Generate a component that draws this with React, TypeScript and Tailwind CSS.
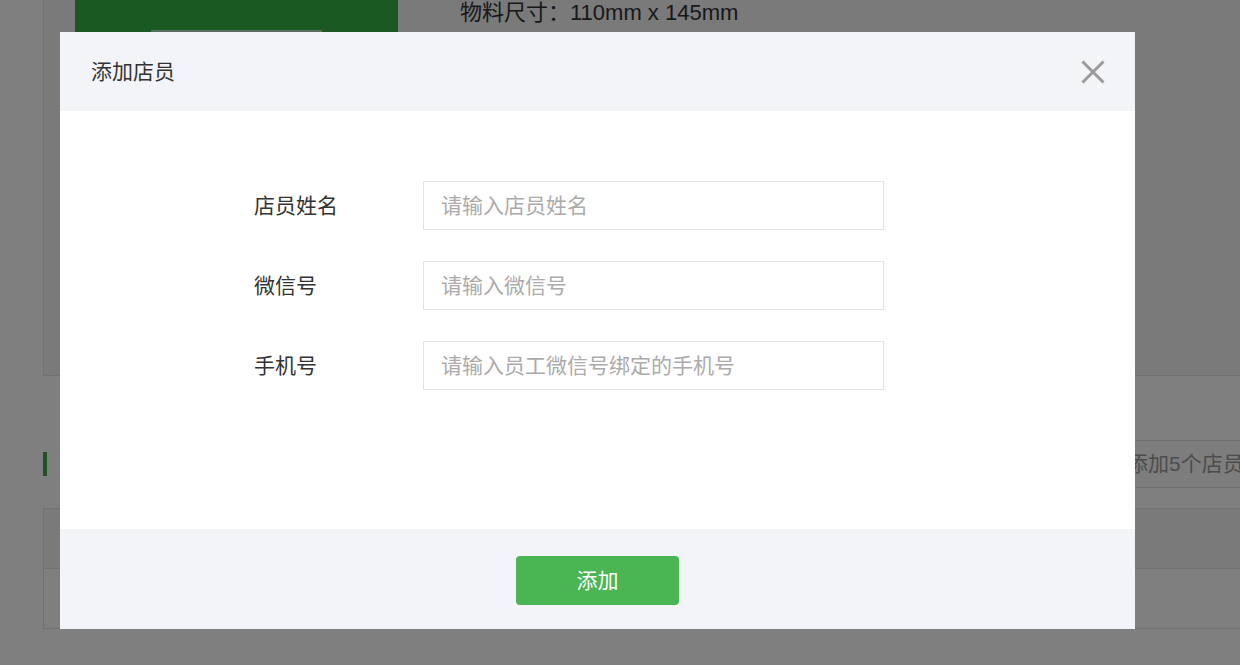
import { useState } from 'react';

const FONT = { fontFamily: '"Liberation Sans", "Noto Sans CJK SC", sans-serif' };

function CloseIcon() {
    return (
        <svg width="24" height="24" viewBox="0 0 24 24" fill="none" stroke="#9a9a9a" strokeWidth="3">
            <path d="M1.5 1.5 L22.5 22.5 M22.5 1.5 L1.5 22.5" />
        </svg>
    );
}

function FormRow({ label, placeholder, value, onChange }: {
    label: string;
    placeholder: string;
    value: string;
    onChange: (v: string) => void;
}) {
    return (
        <div className="flex items-center">
            <label className="w-[169px] text-[21px] text-[#333]">{label}</label>
            <input
                type="text"
                value={value}
                placeholder={placeholder}
                onChange={(e) => onChange(e.target.value)}
                className="w-[461px] h-[49px] px-[17px] border border-[#e3e3e3] bg-white text-[21px] text-[#333] placeholder:text-[#ababab] outline-none"
            />
        </div>
    );
}

export default function App() {
    const [name, setName] = useState('');
    const [wechat, setWechat] = useState('');
    const [phone, setPhone] = useState('');

    return (
        <div className="relative w-[1240px] h-[665px] overflow-hidden bg-white" style={FONT}>
            {/* Page behind the dialog */}
            <div className="w-[1400px]">
                <div className="ml-[43px] h-[376px] flex border-l border-b border-[#e2e2e2] bg-[#f4f4f4]">
                    <div className="ml-[31px] w-[323px] h-[32px] flex items-end bg-[#35b445]">
                        <div className="ml-[76px] w-[171px] h-[2px] bg-[#b8dcbb]" />
                    </div>
                    <div className="ml-[62px] -mt-[4px] text-[22px] text-[#333]">物料尺寸：110mm x 145mm</div>
                </div>

                <div className="mt-[64px] ml-[43px] h-[48px] flex items-center">
                    <div className="w-[4px] h-[24px] bg-[#3aa845]" />
                    <div className="ml-[16px] text-[20px] text-[#333]">店员管理</div>
                    <div className="ml-[971px] h-[48px] flex items-center px-[12px] border border-[#e4e4e4] bg-[#fafafa] text-[21px] text-[#999]">
                        添加5个店员
                    </div>
                </div>

                <div className="mt-[20px] ml-[43px] border border-[#e2e2e2]">
                    <div className="h-[60px] bg-[#f4f4f4] border-b border-[#e2e2e2]" />
                    <div className="h-[59px] bg-white" />
                </div>
            </div>

            {/* Overlay */}
            <div className="absolute inset-0 bg-black/50" />

            {/* Dialog */}
            <div className="absolute left-[60px] top-[32px] w-[1075px] h-[597px] flex flex-col bg-white">
                <div className="h-[79px] flex items-center justify-between pl-[31px] pr-[30px] bg-[#f3f4f8]">
                    <h2 className="text-[21px] text-[#333]">添加店员</h2>
                    <button className="w-[24px] h-[24px]"><CloseIcon /></button>
                </div>

                <div className="flex-1 flex flex-col gap-[31px] pt-[70px] pl-[194px]">
                    <FormRow label="店员姓名" placeholder="请输入店员姓名" value={name} onChange={setName} />
                    <FormRow label="微信号" placeholder="请输入微信号" value={wechat} onChange={setWechat} />
                    <FormRow label="手机号" placeholder="请输入员工微信号绑定的手机号" value={phone} onChange={setPhone} />
                </div>

                <div className="h-[100px] flex justify-center pt-[27px] bg-[#f3f4f8]">
                    <button className="w-[163px] h-[49px] rounded-[4px] bg-[#4ab553] text-[21px] text-white">添加</button>
                </div>
            </div>
        </div>
    );
}
